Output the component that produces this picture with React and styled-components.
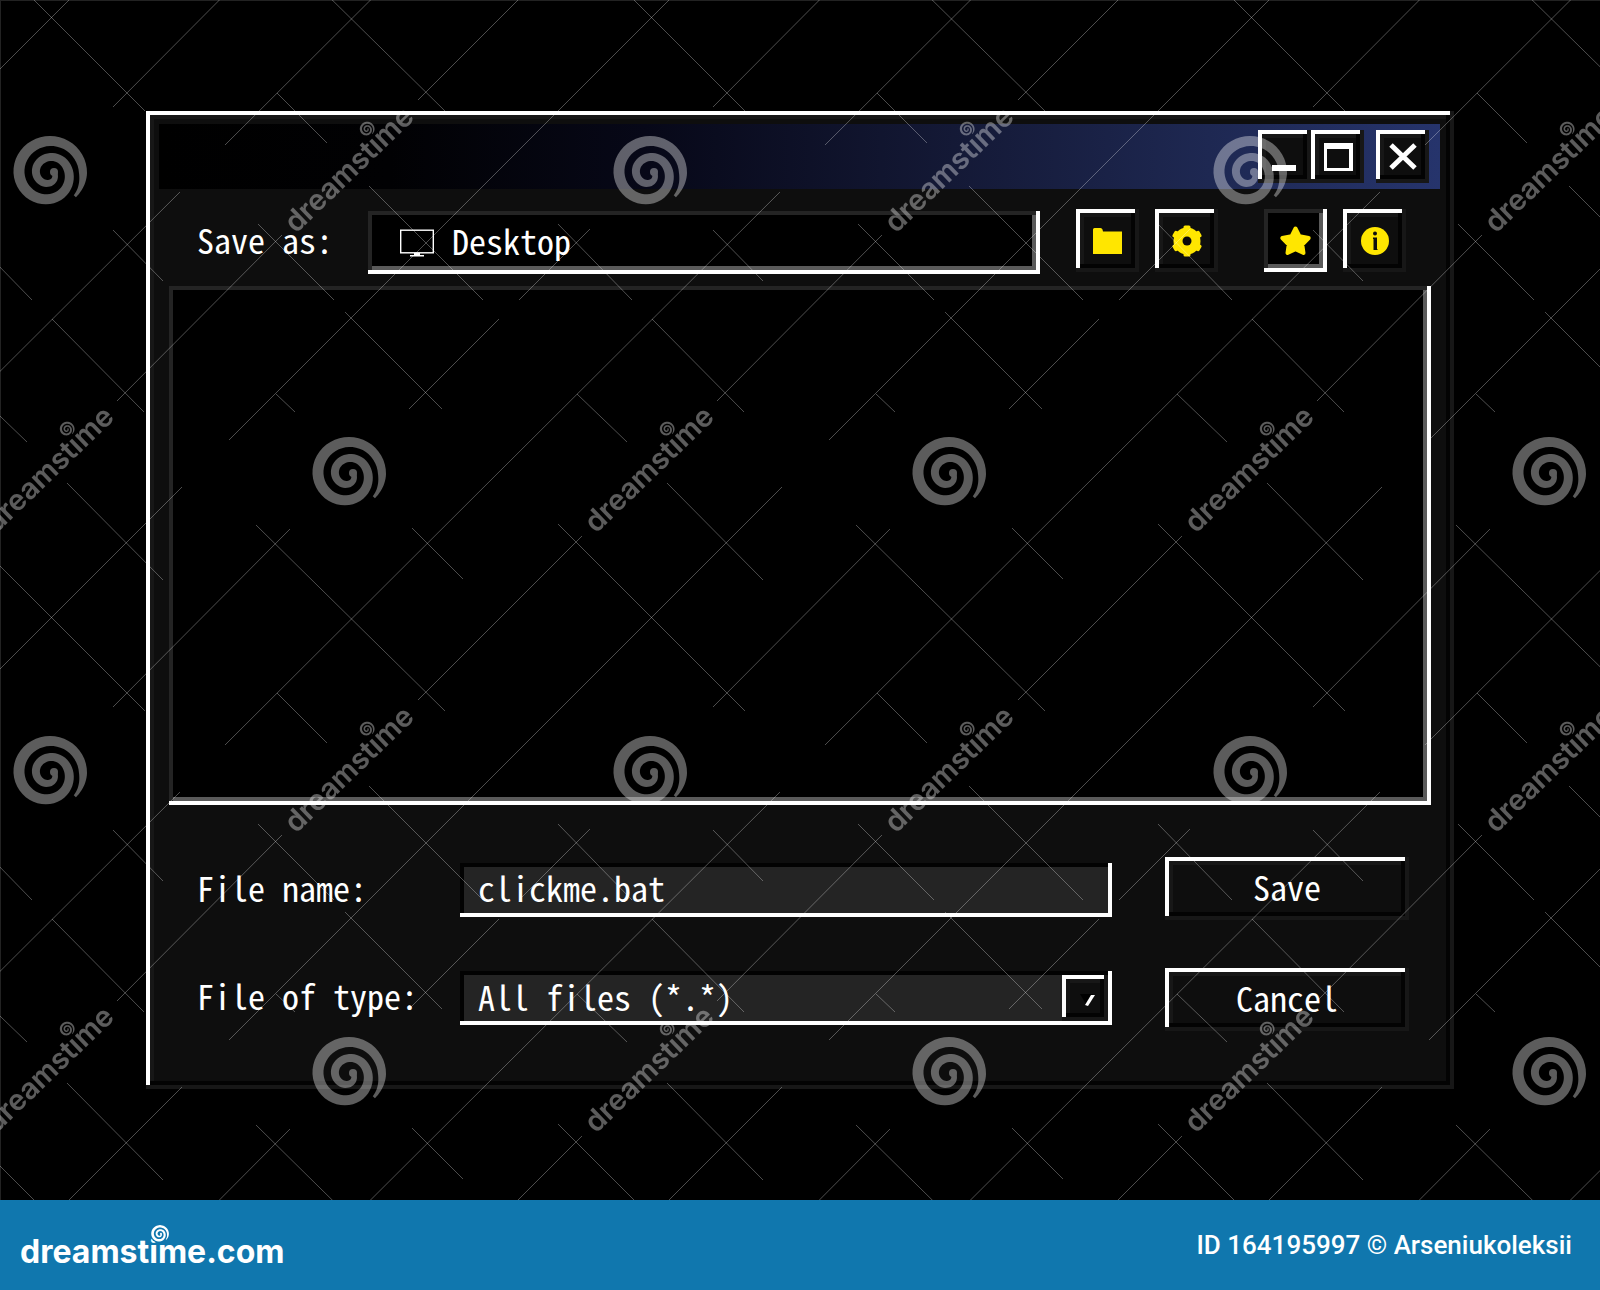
import React from "react";
import styled, { createGlobalStyle, css } from "styled-components";

const GlobalStyle = createGlobalStyle`
  * {
    box-sizing: border-box;
  }
  body {
    margin: 0;
    background: #000;
  }
`;

const mono = css`
  font-family: "Noto Sans Mono CJK SC", "DejaVu Sans Mono", monospace;
  font-size: 34px;
  line-height: 40px;
  color: #fff;
`;

const raised = css`
  background: #0e0e0e;
  box-shadow: inset -4px -4px #171717, inset 4px 4px #fff,
    inset -8px -8px #030303, inset 8px 8px #171717;
`;

const sunken = css`
  background: #000;
  box-shadow: inset -4px -4px #fff, inset 4px 4px #242424,
    inset -8px -8px #5a5a5a;
`;

const Page = styled.div`
  min-height: 100vh;
  display: flex;
  flex-direction: column;
`;

const Desktop = styled.main`
  position: relative;
  flex: 1;
  display: flex;
  padding: 111px 146px;
  overflow: hidden;
`;

const Window = styled.section`
  ${raised}
  flex: 1;
  display: flex;
  flex-direction: column;
  min-width: 0;
  padding: 13px 14px 58px 13px;
`;

const TitleBar = styled.header`
  display: flex;
  justify-content: flex-end;
  height: 65px;
  padding: 6px 11px 6px 0;
  background: linear-gradient(
    90deg,
    #000 0%,
    #010103 18%,
    #070818 38%,
    #141936 62%,
    #1e2852 82%,
    #26346c 100%
  );
`;

const TitleButton = styled.button`
  ${raised}
  width: 53px;
  height: 53px;
  padding: 0;
  border: 0;
  margin-left: ${(props) => (props.$apart ? "12px" : "0")};
`;

const Toolbar = styled.div`
  display: flex;
  align-items: flex-start;
  margin-top: 20px;
  padding: 0 34px 0 38px;
`;

const Label = styled.label`
  ${mono}
  flex: none;
  align-self: center;
  width: ${(props) => props.$width};
  padding-bottom: 4px;
`;

const Location = styled.div`
  ${sunken}
  flex: 1;
  display: flex;
  align-items: center;
  gap: 18px;
  min-width: 0;
  height: 63px;
  margin-top: 2px;
  padding: 4px 8px 4px 32px;
`;

const TextInput = styled.input`
  ${mono}
  flex: 1;
  width: 100%;
  min-width: 0;
  padding: 0 0 4px;
  border: 0;
  outline: 0;
  background: transparent;
`;

const Tools = styled.div`
  display: flex;
  gap: 16px;
  margin-left: ${(props) => props.$gap};
`;

const ToolButton = styled.button`
  ${(props) => (props.$pressed ? sunken : raised)}
  width: 63px;
  height: 63px;
  padding: 0;
  border: 0;
`;

const Icon = styled.svg`
  display: block;
`;

const FileList = styled.div`
  ${sunken}
  flex: 1;
  min-height: 300px;
  margin: 12px 9px 0 10px;
`;

const Form = styled.form`
  display: flex;
  align-items: center;
  margin-top: 52px;
  padding: 0 31px 0 38px;
`;

const Fields = styled.div`
  flex: 1;
  display: flex;
  flex-direction: column;
  gap: 54px;
  min-width: 0;
`;

const Field = styled.div`
  display: flex;
  align-items: center;
`;

const Box = styled.div`
  flex: 1;
  display: grid;
  align-items: center;
  min-width: 0;
  height: 54px;
  padding: 4px;
  background: #242424;
  box-shadow: inset -4px -4px #fff, inset 4px 4px #020202;

  ${TextInput} {
    padding-left: 14px;
  }
`;

const Select = styled.select`
  ${mono}
  grid-area: 1 / 1;
  width: 100%;
  padding: 0 60px 2px 14px;
  border: 0;
  outline: 0;
  appearance: none;
  background: transparent;
`;

const Arrow = styled.span`
  ${raised}
  grid-area: 1 / 1;
  justify-self: end;
  width: 46px;
  height: 46px;
  pointer-events: none;
`;

const Actions = styled.div`
  display: flex;
  flex-direction: column;
  gap: 48px;
  width: 244px;
  margin-left: 53px;
`;

const ActionButton = styled.button`
  ${mono}
  ${raised}
  height: 63px;
  padding: 0 0 4px;
  border: 0;
`;

const Overlay = styled.svg`
  position: absolute;
  top: 0;
  left: 0;
  width: 100%;
  height: 100%;
  box-shadow: inset 1px 1px #222;
  pointer-events: none;
`;

const Footer = styled.footer`
  display: flex;
  align-items: center;
  justify-content: space-between;
  height: 90px;
  padding: 0 28px 0 20px;
  background: #1077ae;
  color: #fff;
`;

const Credit = styled.p`
  margin: 0;
  font: 500 26px/30px Roboto, sans-serif;

  span {
    font-weight: 400;
  }
`;

// centre line of the swirl: angle in degrees, radius, band width
const SWIRL = [
  [43, 34, 3],
  [0, 33, 8],
  [-90, 32, 10],
  [-180, 31, 11],
  [-270, 26, 10],
  [-360, 19, 9],
  [-450, 16, 8],
  [-540, 14, 8],
  [-630, 10, 7],
  [-720, 4, 7],
];

const spline = (a, b, c, d, t) =>
  b +
  0.5 *
    t *
    (c - a + t * (2 * a - 5 * b + 4 * c - d + t * (3 * (b - c) + d - a)));

const swirlPath = () => {
  const outer = [];
  const inner = [];
  for (let i = 0; i < SWIRL.length - 1; i++) {
    const p1 = SWIRL[i];
    const p2 = SWIRL[i + 1];
    const p0 = SWIRL[i - 1] || p1;
    const p3 = SWIRL[i + 2] || p2;
    for (let s = 0; s <= 12; s++) {
      const t = s / 12;
      const angle = ((p1[0] + (p2[0] - p1[0]) * t) * Math.PI) / 180;
      const r = spline(p0[1], p1[1], p2[1], p3[1], t);
      const w = spline(p0[2], p1[2], p2[2], p3[2], t) / 2;
      const at = (d) =>
        `${(Math.cos(angle) * d).toFixed(2)} ${(Math.sin(angle) * d).toFixed(2)}`;
      outer.push(at(r + w));
      inner.unshift(at(r - w));
    }
  }
  return `M${outer.concat(inner).join("L")}Z`;
};

const SWIRL_PATH = swirlPath();

const Swirl = (props) => (
  <g {...props}>
    <path d={SWIRL_PATH} />
    <circle cx="4" cy="-1" r="4" />
  </g>
);

const LINES = [
  [345, 312, 442, 409],
  [276, 394, 295, 412],
  [652, 319, 744, 412],
  [577, 394, 627, 442],
  [256, 525, 445, 711],
  [412, 528, 463, 579],
  [558, 524, 745, 711],
  [667, 483, 763, 580],
  [277, 693, 327, 743],
  [369, 786, 483, 900],
  [713, 830, 763, 881],
  [258, 824, 334, 900],
  [558, 824, 632, 900],
  [782, 487, 229, 1040],
  [780, 192, 225, 745],
  [409, 409, 499, 319],
  [713, 707, 890, 529],
  [418, 700, 582, 536],
  [117, 401, 282, 235],
  [519, 900, 590, 829],
];

const STEPS = [-600, 0, 600];

const Watermark = () => (
  <Overlay aria-hidden="true">
    <defs>
      <mask id="dot" maskUnits="userSpaceOnUse" x="-10" y="-50" width="240" height="70">
        <rect x="-10" y="-50" width="240" height="70" fill="#fff" />
        <rect x="115" y="-27" width="10" height="10" fill="#000" />
      </mask>
      <g id="mark">
        <g stroke="#fff" strokeOpacity="0.3">
          {LINES.map(([x1, y1, x2, y2]) => (
            <line key={`${x1}-${y1}`} x1={x1} y1={y1} x2={x2} y2={y2} />
          ))}
        </g>
        <g fill="#fff" opacity="0.36">
          <Swirl transform="translate(50 173)" />
          <Swirl transform="translate(349 474)" />
          {[
            [296, 234],
            [596, 534],
          ].map(([x, y]) => (
            <g key={x} transform={`translate(${x} ${y}) rotate(-44)`}>
              <text
                mask="url(#dot)"
                fontFamily="Inter, sans-serif"
                fontSize="29"
                fontWeight="600"
              >
                dreamstime
              </text>
              <Swirl transform="translate(124 -26) rotate(44) scale(0.2)" />
            </g>
          ))}
        </g>
      </g>
      <pattern id="tile" width="600" height="600" patternUnits="userSpaceOnUse">
        {STEPS.map((x) =>
          STEPS.map((y) => <use key={`${x} ${y}`} href="#mark" x={x} y={y} />)
        )}
      </pattern>
    </defs>
    <rect width="100%" height="100%" fill="url(#tile)" />
  </Overlay>
);

const Logo = () => (
  <svg width="280" height="60" role="img" aria-label="dreamstime.com" fill="#fff">
    <text x="0" y="48" fontFamily="Inter, sans-serif" fontSize="32" fontWeight="700">
      dreamstime.com
    </text>
    <circle cx="139" cy="19" r="9" fill="#1077ae" />
    <Swirl transform="translate(140 19) scale(0.24)" />
  </svg>
);

const App = () => {
  return (
    <Page>
      <GlobalStyle />
      <Desktop>
        <Window>
          <TitleBar>
            <TitleButton aria-label="Minimize">
              <Icon width="53" height="53" fill="#fff">
                <path d="M14 35h24v6H14z" />
              </Icon>
            </TitleButton>
            <TitleButton aria-label="Maximize">
              <Icon width="53" height="53" fill="#fff">
                <path fillRule="evenodd" d="M13 13h29v28H13zM16 19v19h22V19z" />
              </Icon>
            </TitleButton>
            <TitleButton $apart aria-label="Close">
              <Icon width="53" height="53" stroke="#fff" strokeWidth="5">
                <path d="M15 15L39 38M39 15L15 38" />
              </Icon>
            </TitleButton>
          </TitleBar>
          <Toolbar>
            <Label $width="171px" htmlFor="location">
              Save as:
            </Label>
            <Location>
              <Icon width="34" height="28" fill="none" stroke="#fff">
                <rect x="0.7" y="1.2" width="32.6" height="22.6" strokeWidth="1.4" />
                <path d="M14 24h6v2h4v1.6H10V26h4z" fill="#fff" stroke="none" />
              </Icon>
              <TextInput id="location" defaultValue="Desktop" />
            </Location>
            <Tools $gap="36px">
              <ToolButton aria-label="New folder">
                <Icon width="63" height="63" fill="#ffe600">
                  <path d="M17 20.500q0-1.500 1.500-1.500h6q1.500 0 2 1.500l.5 2h19V45H17z" />
                </Icon>
              </ToolButton>
              <ToolButton aria-label="Settings">
                <Icon width="63" height="63" fill="#ffe600">
                  <circle cx="32" cy="32" r="13.500" />
                  {[0, 60, 120].map((angle) => (
                    <rect
                      key={angle}
                      x="28.500"
                      y="16.500"
                      width="7"
                      height="31"
                      rx="1.500"
                      transform={`rotate(${angle} 32 32)`}
                    />
                  ))}
                  <circle cx="32" cy="32" r="4.500" fill="#0a0a0a" />
                </Icon>
              </ToolButton>
            </Tools>
            <Tools $gap="46px">
              <ToolButton $pressed aria-label="Favorites" aria-pressed="true">
                <Icon width="63" height="63" fill="#ffe600" stroke="#ffe600" strokeWidth="4" strokeLinejoin="round">
                  <path d="M31.500 19.500l4 7.800 9.200 1.700-6.400 6.700 1.200 8.300-8-3.800-8 3.800 1.200-8.300-6.400-6.700 9.200-1.700z" />
                </Icon>
              </ToolButton>
              <ToolButton aria-label="Info">
                <Icon width="63" height="63" fill="#0e0e0e">
                  <circle cx="32" cy="32" r="14" fill="#ffe600" />
                  <circle cx="32" cy="24.500" r="2" />
                  <path d="M30 28.500h4V40h.5v1h-4V30H30z" />
                </Icon>
              </ToolButton>
            </Tools>
          </Toolbar>
          <FileList />
          <Form onSubmit={(e) => e.preventDefault()}>
            <Fields>
              <Field>
                <Label $width="263px" htmlFor="name">
                  File name:
                </Label>
                <Box>
                  <TextInput id="name" defaultValue="clickme.bat" />
                </Box>
              </Field>
              <Field>
                <Label $width="263px" htmlFor="type">
                  File of type:
                </Label>
                <Box>
                  <Select id="type">
                    <option>All files (*.*)</option>
                  </Select>
                  <Arrow>
                    <Icon width="46" height="46">
                      <path d="M18 19h13l-6.500 11z" fill="#000" />
                      <path d="M29 20h4l-7 11-3-1z" fill="#fff" />
                    </Icon>
                  </Arrow>
                </Box>
              </Field>
            </Fields>
            <Actions>
              <ActionButton type="submit">Save</ActionButton>
              <ActionButton type="button">Cancel</ActionButton>
            </Actions>
          </Form>
        </Window>
        <Watermark />
      </Desktop>
      <Footer>
        <Logo />
        <Credit>
          ID 164195997 <span>©</span> Arseniukoleksii
        </Credit>
      </Footer>
    </Page>
  );
};

export default App;
